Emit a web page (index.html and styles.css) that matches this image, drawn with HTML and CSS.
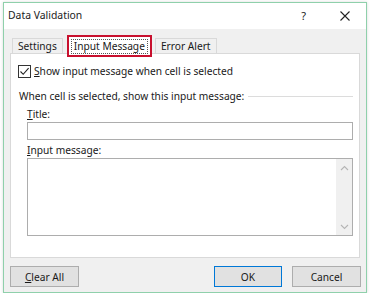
FILE: index.html
```html
<!DOCTYPE html>
<html>
<head>
    <meta charset="UTF-8" />
    <title>Data Validation</title>
    <link rel="stylesheet" href="styles.css">
</head>
<body>
    <div class="janela">
        <div class="barra-titulo">
            <span class="titulo">Data Validation</span>
            <span class="ajuda">?</span>
            <svg class="fechar" width="10" height="10" viewBox="0 0 10 10">
                <path d="M0.5 0.5 L9.5 9.5 M9.5 0.5 L0.5 9.5" stroke="#222" stroke-width="1.1" fill="none" />
            </svg>
        </div>
        <div class="conteudo">
            <div class="separadores">
                <div class="separador">Settings</div>
                <div class="separador ativo"><span class="foco">Input Message</span></div>
                <div class="separador">Error Alert</div>
            </div>
            <div class="painel">
                <div class="linha-check">
                    <span class="caixa">
                        <svg width="11" height="11" viewBox="0 0 11 11">
                            <path d="M1.5 5.5 L4.2 8.3 L9.6 2.2" stroke="#222" stroke-width="1.1" fill="none" />
                        </svg>
                    </span>
                    <span><u>S</u>how input message when cell is selected</span>
                </div>
                <div class="grupo">
                    <span>When cell is selected, show this input message:</span>
                    <span class="traco"></span>
                </div>
                <div class="rotulo"><u>T</u>itle:</div>
                <div class="campo"></div>
                <div class="rotulo"><u>I</u>nput message:</div>
                <div class="area">
                    <div class="barra-rolar">
                        <svg width="9" height="6" viewBox="0 0 9 6"><path d="M1 5 L4.5 1.5 L8 5" stroke="#b5b5b5" stroke-width="1.1" fill="none" /></svg>
                        <svg width="9" height="6" viewBox="0 0 9 6"><path d="M1 1 L4.5 4.5 L8 1" stroke="#b5b5b5" stroke-width="1.1" fill="none" /></svg>
                    </div>
                </div>
            </div>
        </div>
        <div class="botoes">
            <button class="botao"><u>C</u>lear All</button>
            <span class="espaco"></span>
            <button class="botao ok">OK</button>
            <button class="botao">Cancel</button>
        </div>
    </div>
</body>
</html>
```
FILE: styles.css
```css
body {
    margin: 0;
    background-color: white;
    font-family: "Noto Sans", "Open Sans", sans-serif;
    font-size: 10.2px;
    color: #1a1a1a;
}

.janela {
    margin: 2px 0 0 3px;
    width: 362px;
    height: 289px;
    border: 1px solid #8fd0ab;
    background-color: #f0f0f0;
    box-shadow: 0 0 3px rgba(0, 0, 0, 0.15);
    display: flex;
    flex-direction: column;
}

.barra-titulo {
    height: 26px;
    background-color: white;
    display: flex;
    align-items: center;
}

.titulo {
    font-size: 10.4px;
    margin-left: 4px;
    margin-top: -2px;
}

.ajuda {
    margin-left: auto;
    font-size: 11px;
    margin-right: 34px;
    margin-top: -2px;
}

.fechar {
    margin-right: 16px;
    margin-top: -1px;
}

.conteudo {
    padding: 0 6px 0 6px;
}

.separadores {
    display: flex;
    align-items: flex-end;
    height: 24px;
    padding-left: 2px;
}

.separador {
    height: 14px;
    line-height: 14px;
    padding: 0 5px;
    border: 1px solid #d9d9d9;
    border-bottom: none;
    background-color: #f0f0f0;
}

.separador.ativo {
    height: 18px;
    line-height: 18px;
    padding: 0 3px;
    margin: 0 3px 0 4px;
    background-color: white;
    border: 2px solid #c8102e;
    margin-bottom: -4px;
    position: relative;
    z-index: 1;
}

.foco {
    display: inline-block;
    line-height: 13px;
    padding: 0 2px;
    outline: 1px dotted #555;
}

.painel {
    height: 203px;
    background-color: white;
    border: 1px solid #d9d9d9;
    padding: 0 6px 0 7px;
}

.linha-check {
    display: flex;
    align-items: center;
    gap: 3px;
    margin-top: 10px;
    height: 14px;
}

.caixa {
    width: 11px;
    height: 11px;
    border: 1px solid #333;
    display: flex;
}

.grupo {
    display: flex;
    align-items: center;
    gap: 4px;
    margin-top: 11px;
    margin-left: 1px;
    height: 14px;
}

.traco {
    flex: 1;
    height: 1px;
    background-color: #dcdcdc;
}

.rotulo {
    margin-left: 9px;
    margin-top: 4px;
    height: 14px;
    line-height: 14px;
}

.campo {
    margin-left: 9px;
    margin-top: 1px;
    height: 16px;
    border: 1px solid #adadad;
}

.campo + .rotulo {
    margin-top: 3px;
}

.area {
    margin-left: 9px;
    margin-top: 1px;
    height: 76px;
    border: 1px solid #adadad;
    display: flex;
    justify-content: flex-end;
}

.barra-rolar {
    width: 16px;
    background-color: #f0f0f0;
    display: flex;
    flex-direction: column;
    justify-content: space-between;
    align-items: center;
    padding: 6px 0 5px 0;
}

.botoes {
    display: flex;
    gap: 10px;
    padding: 8px 5px 0 6px;
}

.espaco {
    flex: 1;
}

.botao {
    width: 69px;
    height: 21px;
    padding: 0;
    font-family: "Noto Sans", "Open Sans", sans-serif;
    font-size: 10.2px;
    color: #1a1a1a;
    background-color: #e1e1e1;
    border: 1px solid #adadad;
}

.botao.ok {
    width: 68px;
    border: 1px solid #0078d7;
}
```
